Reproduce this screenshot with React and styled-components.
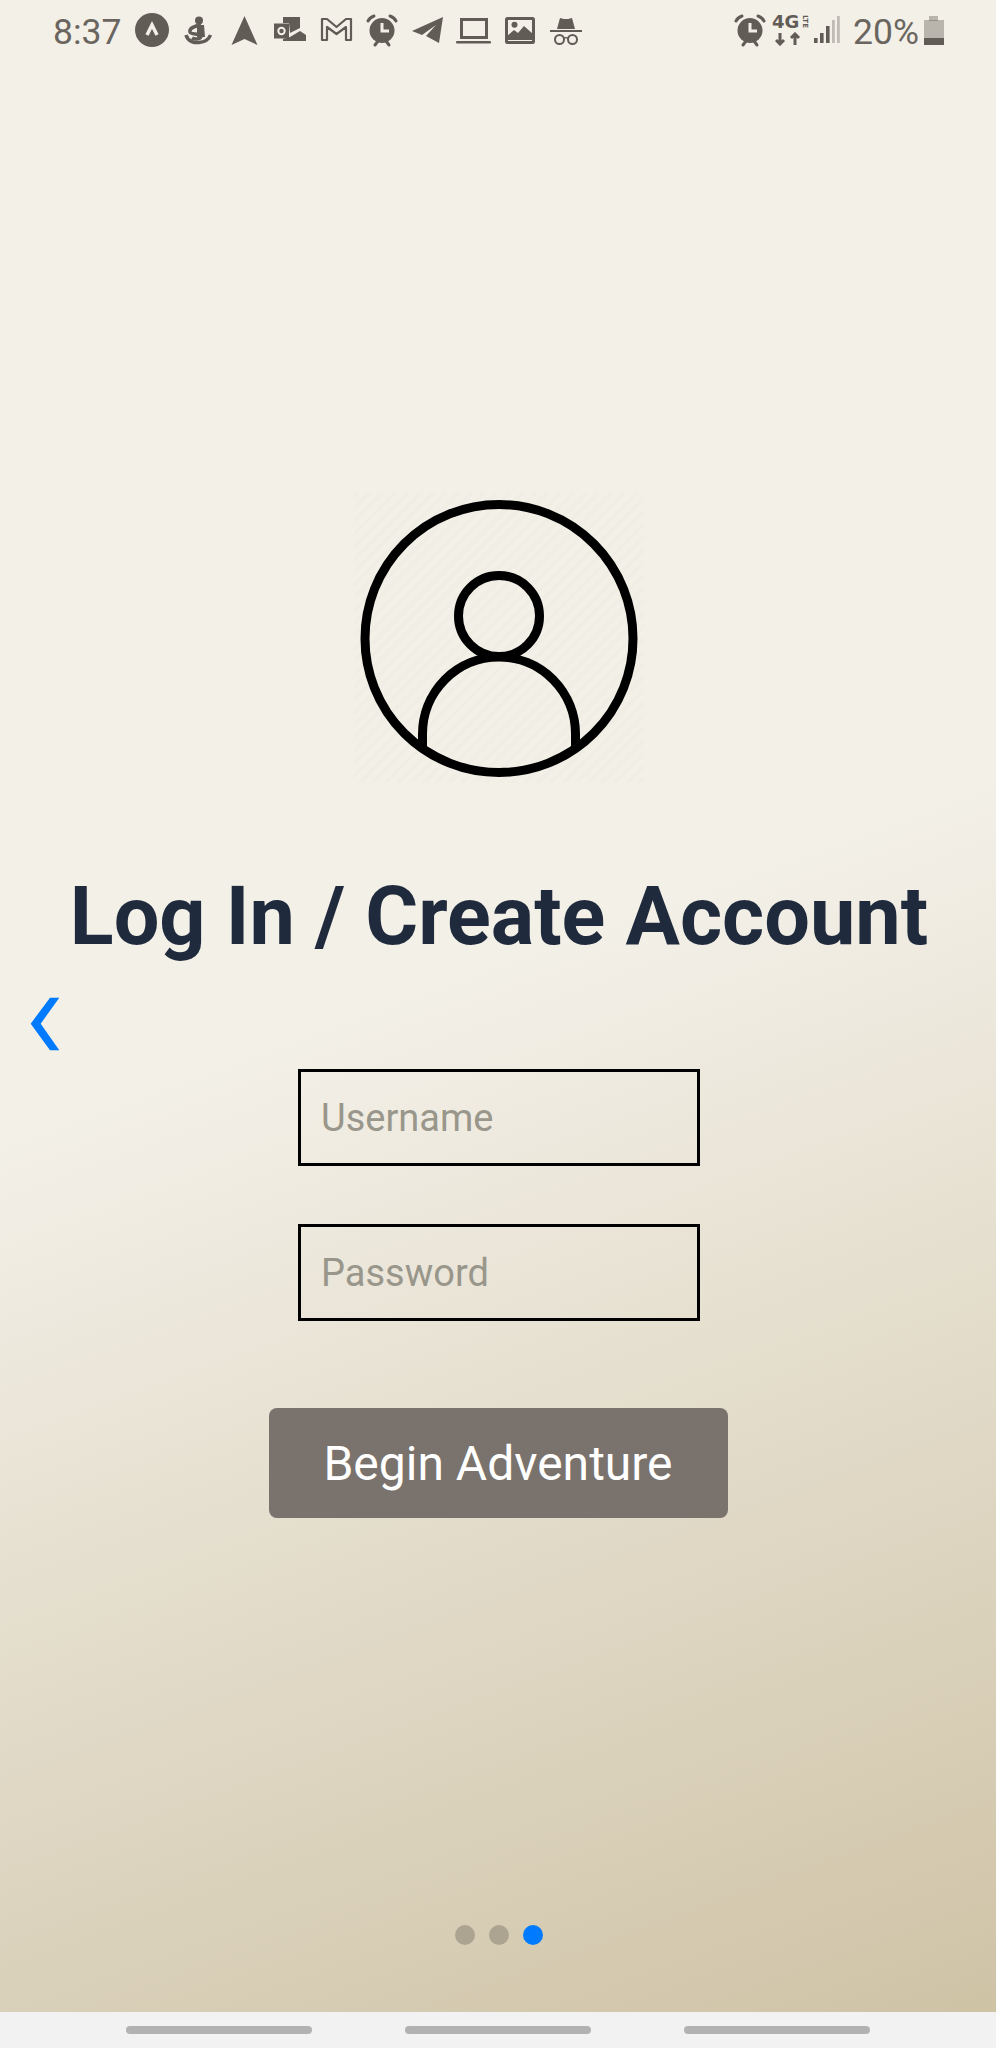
import React from 'react';
import styled, { createGlobalStyle } from 'styled-components';

const GlobalStyle = createGlobalStyle`
  html, body {
    margin: 0;
    padding: 0;
  }
  body {
    font-family: Roboto, "Liberation Sans", sans-serif;
  }
`;

const Screen = styled.div`
  display: flex;
  flex-direction: column;
  width: 996px;
  height: 2048px;
  overflow: hidden;
`;

const Stage = styled.main`
  flex: 1;
  display: flex;
  flex-direction: column;
  align-items: center;
  background: linear-gradient(160deg, #f3f0e8 48%, #cfc3a6 100%);
`;

const StatusBar = styled.header`
  align-self: stretch;
  display: flex;
  align-items: flex-start;
  justify-content: space-between;
  height: 60px;
  padding: 8px 52px 0 53px;
  color: #6a655f;
`;

const StatusGroup = styled.div`
  display: flex;
  align-items: flex-start;
`;

const StatusText = styled.span`
  font-weight: 400;
  font-size: 35.5px;
  line-height: 48px;
  margin-right: ${p => p.$gap || 0}px;
`;

const NetworkBadge = styled.div`
  position: relative;
  width: 37px;
  height: 44px;
  margin: 0 5px 0 2px;
  color: #615c56;
`;

const NetworkLabel = styled.span`
  position: absolute;
  left: 0;
  top: 5px;
  font-family: "DejaVu Sans", sans-serif;
  font-weight: 700;
  font-size: 18px;
  line-height: 17px;
`;

const NetworkSub = styled.span`
  position: absolute;
  left: 26px;
  top: 10px;
  font-family: "DejaVu Sans", sans-serif;
  font-weight: 700;
  font-size: 7px;
  line-height: 7px;
  transform: rotate(90deg);
`;

const NetworkArrows = styled.svg`
  position: absolute;
  left: 3px;
  top: 24px;
`;

const Avatar = styled.div`
  width: 290px;
  height: 290px;
  margin: 425px 0 0 2px;
  background: repeating-linear-gradient(
    135deg,
    rgba(120, 110, 80, 0.018) 0 4px,
    transparent 4px 9px
  );
`;

const Title = styled.h1`
  margin: 87px 0 0 2px;
  font-weight: 700;
  font-size: 81px;
  line-height: 94px;
  color: #1f2a3c;
  white-space: nowrap;
`;

const BackRow = styled.div`
  align-self: stretch;
  display: flex;
  height: 54px;
  margin-top: 33px;
  padding-left: 30px;
`;

const LoginForm = styled.form`
  display: flex;
  flex-direction: column;
  align-items: center;
  margin-top: 18px;
`;

const Field = styled.input`
  box-sizing: border-box;
  display: block;
  width: 402px;
  height: 97px;
  margin: 0 0 58px 2px;
  padding: 0 20px;
  border: 3px solid #000;
  border-radius: 0;
  background: transparent;
  font-family: Roboto, sans-serif;
  font-size: 38px;
  outline: none;

  &::placeholder {
    color: #99968b;
    opacity: 1;
  }
`;

const SubmitButton = styled.button`
  width: 459px;
  height: 110px;
  margin-top: 29px;
  border: none;
  border-radius: 8px;
  background: #7a726c;
  color: #fff;
  font-family: Roboto, sans-serif;
  font-size: 48px;
`;

const Pager = styled.div`
  display: flex;
  gap: 14px;
  margin: auto 0 67px 1px;
`;

const PagerDot = styled.span`
  width: 20px;
  height: 20px;
  border-radius: 50%;
  background: ${p => (p.$active ? '#007bff' : '#aca491')};
`;

const NavBar = styled.nav`
  display: flex;
  justify-content: space-between;
  align-items: flex-start;
  height: 36px;
  padding: 14px 126px 0;
  box-sizing: border-box;
  background: #f2f2f2;
`;

const NavPill = styled.span`
  width: 186px;
  height: 8px;
  border-radius: 4px;
  background: #b2b2b2;
`;

const IconCell = styled.svg`
  display: block;
  flex: none;
  color: #615c56;
`;

const Icon = ({ children, width = 46 }) => (
  <IconCell width={width} height="44" viewBox={`0 0 ${width} 44`} fill="currentColor">
    {children}
  </IconCell>
);

const AlarmGlyph = () => (
  <>
    <circle cx="23" cy="22.5" r="12.5" />
    <path d="M19 33l-3 4M27 33l3 4" stroke="currentColor" strokeWidth="3" strokeLinecap="round" />
    <path d="M9 13c1-2 3-4 6-5M37 13c-1-2-3-4-6-5" fill="none" stroke="currentColor" strokeWidth="3" strokeLinecap="round" />
    <path d="M23 15v8h7" fill="none" stroke="#f3f0e8" strokeWidth="3" />
  </>
);

const StatusIcons = () => (
  <>
    <Icon>
      <circle cx="23" cy="22" r="17" />
      <path d="M18 27l5-10 5 10" fill="none" stroke="#f3f0e8" strokeWidth="3.5" />
    </Icon>
    <Icon>
      <circle cx="24" cy="12.5" r="4" />
      <path d="M22 17h7l1 12h-8z" />
      <path d="M26 17c-6 1-12 3-11 7 1 3 9 1 11 4 0 3-6 4-9 2" fill="none" stroke="currentColor" strokeWidth="3.5" />
      <path d="M11 27c2 7 9 8 13 7.500 6-.5 10-3.500 11.500-7.500" fill="none" stroke="currentColor" strokeWidth="3.500" />
    </Icon>
    <Icon>
      <polygon points="23.5,8 10.5,37 23.5,31 36.5,37" />
    </Icon>
    <Icon>
      <polygon points="16,9 33,9 33,20 23,25 22,15 16,15" />
      <polygon points="23,29 33,23 39,27 39,33 16,33 16,31" />
      <rect x="7" y="15.5" width="15" height="15" />
      <circle cx="14.5" cy="23" r="3.2" fill="none" stroke="#f3f0e8" strokeWidth="2" />
    </Icon>
    <Icon>
      <path d="M9 11h5l9.500 8 9.500-8h5v21h-5V19l-9.500 7-9.500-7v13H9z" fill="none" stroke="currentColor" strokeWidth="2.2" strokeLinejoin="round" />
    </Icon>
    <Icon>
      <AlarmGlyph />
    </Icon>
    <Icon>
      <polygon points="38,9 7,23 17,27 31,17 21,28 34,35" />
    </Icon>
    <Icon>
      <rect x="10.5" y="11.5" width="25" height="18" fill="none" stroke="currentColor" strokeWidth="3" />
      <rect x="5" y="33" width="35" height="2.6" rx="1" />
    </Icon>
    <Icon>
      <rect x="9.5" y="10.5" width="27" height="24" rx="1" fill="none" stroke="currentColor" strokeWidth="3" />
      <circle cx="17.5" cy="16.7" r="3" />
      <path d="M10 32v-4l7-6 4 3 6-7 9 8v6z" />
    </Icon>
    <Icon>
      <path d="M14 21l3-11c3 1 5 1 6 1s3 0 6-1l3 11z" />
      <rect x="7" y="22" width="32" height="2" />
      <circle cx="16.5" cy="31.5" r="4.5" fill="none" stroke="currentColor" strokeWidth="2" />
      <circle cx="29.5" cy="31.5" r="4.5" fill="none" stroke="currentColor" strokeWidth="2" />
      <path d="M21 30.500c1-1 3-1 4 0" fill="none" stroke="currentColor" strokeWidth="1.6" />
    </Icon>
  </>
);

const App = () => (
  <Screen>
    <GlobalStyle />
    <Stage>
      <StatusBar>
        <StatusGroup>
          <StatusText $gap={8}>8:37</StatusText>
          <StatusIcons />
        </StatusGroup>
        <StatusGroup>
          <Icon width={40}>
            <g transform="translate(-3 0)">
              <AlarmGlyph />
            </g>
          </Icon>
          <NetworkBadge>
            <NetworkLabel>4G</NetworkLabel>
            <NetworkSub>LTE</NetworkSub>
            <NetworkArrows width="30" height="14" viewBox="0 0 30 14" fill="none" stroke="currentColor" strokeWidth="3">
              <path d="M5 1v11M1 8l4 4 4-4M20 13V2M16 6l4-4 4 4" />
            </NetworkArrows>
          </NetworkBadge>
          <Icon width={39}>
            <rect x="0" y="30" width="3.6" height="5" />
            <rect x="6" y="25" width="3.6" height="10" />
            <rect x="12" y="18" width="3.6" height="17" />
            <rect x="18" y="12" width="2.8" height="23" opacity="0.35" />
            <rect x="23" y="8" width="2.8" height="27" opacity="0.35" />
          </Icon>
          <StatusText $gap={5}>20%</StatusText>
          <Icon width={20}>
            <rect x="5" y="8" width="9" height="5" opacity="0.4" />
            <rect x="0" y="12" width="20" height="18" opacity="0.4" />
            <rect x="0" y="30" width="20" height="7" />
          </Icon>
        </StatusGroup>
      </StatusBar>

      <Avatar>
        <svg width="290" height="290" viewBox="0 0 290 290" fill="none" stroke="#000" strokeWidth="9">
          <circle cx="145" cy="145.5" r="134" />
          <circle cx="145" cy="123" r="40.5" />
          <path d="M68.5 256v-15a76.5 77 0 0 1 153 0v15" />
        </svg>
      </Avatar>

      <Title>Log In / Create Account</Title>

      <BackRow>
        <svg width="30" height="54" viewBox="0 0 30 54" fill="#007bff">
          <polygon points="29.3,0.7 20,0.7 0.7,26.7 20,53.3 29.3,53.3 10.7,26.7" />
        </svg>
      </BackRow>

      <LoginForm>
        <Field placeholder="Username" />
        <Field type="password" placeholder="Password" />
        <SubmitButton type="button">Begin Adventure</SubmitButton>
      </LoginForm>

      <Pager>
        <PagerDot />
        <PagerDot />
        <PagerDot $active />
      </Pager>
    </Stage>
    <NavBar>
      <NavPill />
      <NavPill />
      <NavPill />
    </NavBar>
  </Screen>
);

export default App;
